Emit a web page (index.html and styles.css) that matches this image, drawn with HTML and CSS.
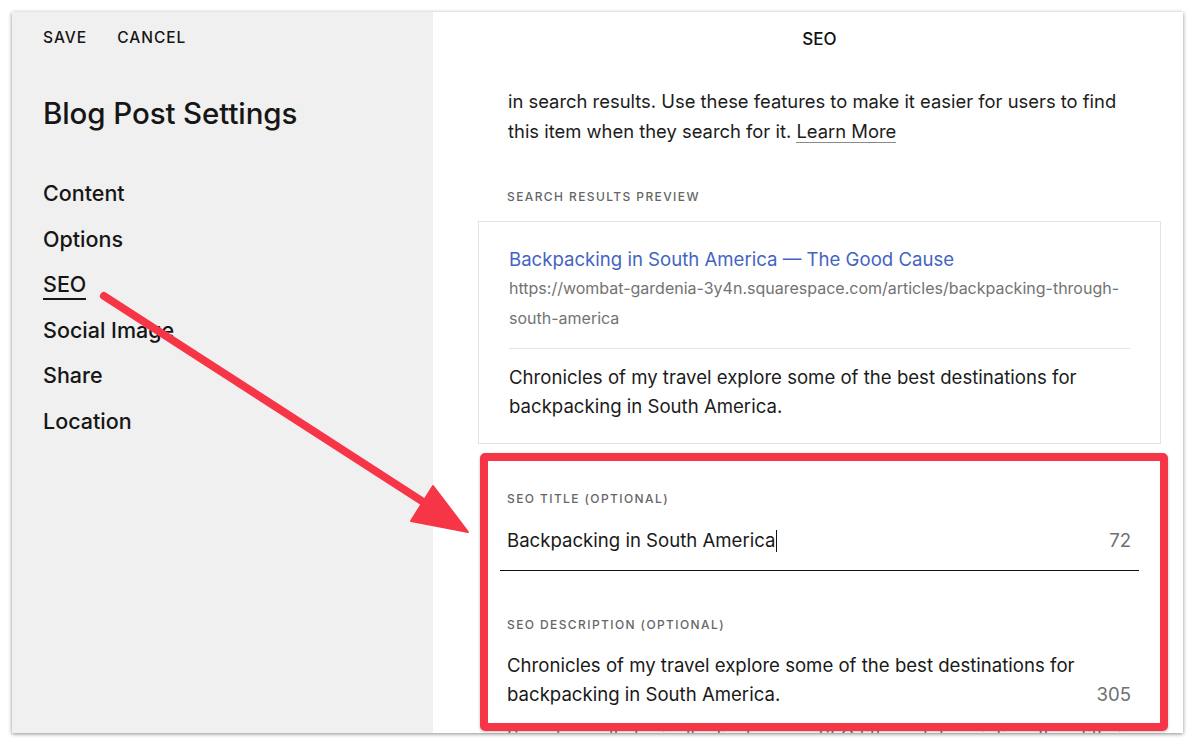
FILE: index.html
```html
<!DOCTYPE html>
<html lang="en">
<head>
<meta charset="utf-8">
<title>Blog Post Settings</title>
<link rel="stylesheet" href="styles.css">
</head>
<body>
<div class="window">
  <aside class="sidebar">
    <div class="actions"><span class="action">SAVE</span><span class="action">CANCEL</span></div>
    <h1 class="title">Blog Post Settings</h1>
    <nav class="nav">
      <div class="nav-item">Content</div>
      <div class="nav-item">Options</div>
      <div class="nav-item"><span class="active">SEO</span></div>
      <div class="nav-item">Social Image</div>
      <div class="nav-item">Share</div>
      <div class="nav-item">Location</div>
    </nav>
  </aside>
  <main class="pane">
    <header class="pane-head">SEO</header>
    <div class="pane-body">
      <p class="intro">in search results. Use these features to make it easier for users to find this item when they search for it. <span class="learn">Learn More</span></p>
      <div class="label preview-label">SEARCH RESULTS PREVIEW</div>
      <div class="preview">
        <div class="p-title">Backpacking in South America — The Good Cause</div>
        <div class="p-url">https://wombat-gardenia-3y4n.squarespace.com/articles/backpacking-through-<br>south-america</div>
        <div class="p-rule"></div>
        <div class="p-desc">Chronicles of my travel explore some of the best destinations for backpacking in South America.</div>
      </div>
      <div class="fields">
        <div class="field">
          <div class="label">SEO TITLE (OPTIONAL)</div>
          <div class="input">
            <span class="value">Backpacking in South America<span class="caret"></span></span>
            <span class="count">72</span>
          </div>
        </div>
        <div class="field field-desc">
          <div class="label">SEO DESCRIPTION (OPTIONAL)</div>
          <div class="textarea">
            <span class="value">Chronicles of my travel explore some of the best destinations for backpacking in South America.</span>
            <span class="count">305</span>
          </div>
        </div>
        <p class="help">Search results typically display your SEO title and description. If no title is set, the item title is used.</p>
      </div>
    </div>
  </main>
</div>
<div class="highlight"></div>
<svg class="arrow" width="1200" height="749" viewBox="0 0 1200 749" aria-hidden="true">
  <line x1="104" y1="296" x2="428" y2="505" stroke="#f63646" stroke-width="8" stroke-linecap="round"/>
  <polygon points="468,532 433,486 411,521" fill="#f63646" stroke="#f63646" stroke-width="2" stroke-linejoin="round"/>
</svg>
</body>
</html>
```

FILE: styles.css
```css
* { box-sizing: border-box; }

html, body {
  margin: 0;
  padding: 0;
  background: #ffffff;
}

body {
  width: 1200px;
  height: 749px;
  overflow: hidden;
  position: relative;
  font-family: "Inter", "Liberation Sans", sans-serif;
  color: #161616;
}

.window {
  margin: 12px 0 0 12px;
  width: 1171px;
  height: 721px;
  display: flex;
  overflow: hidden;
  background: #ffffff;
  box-shadow: 0 1px 4px rgba(0, 0, 0, 0.45);
}

/* ---------- sidebar ---------- */
.sidebar {
  width: 421px;
  flex: none;
  background: #f0f0f0;
  padding: 16px 31px 0;
}

.actions {
  display: flex;
  gap: 30px;
  line-height: 20px;
}

.action {
  font-size: 15.5px;
  font-weight: 500;
  letter-spacing: 1px;
}

.title {
  margin: 47px 0 0;
  font-size: 29.5px;
  font-weight: 500;
  line-height: 36px;
  letter-spacing: -0.1px;
}

.nav {
  margin-top: 40px;
  display: flex;
  flex-direction: column;
}

.nav-item {
  font-size: 21.5px;
  font-weight: 500;
  line-height: 45.6px;
}

.active {
  border-bottom: 2px solid #161616;
  padding-bottom: 1px;
}

/* ---------- main pane ---------- */
.pane {
  flex: 1;
  padding: 0 22px 0 45px;
}

.pane-head {
  height: 54px;
  line-height: 54px;
  text-align: center;
  font-size: 17px;
  font-weight: 500;
  color: #111111;
}

.pane-body {
  display: flex;
  flex-direction: column;
}

.intro {
  margin: 20px 0 0;
  padding: 0 30px;
  font-size: 18.4px;
  line-height: 30px;
  color: #1c1c1c;
}

.learn {
  border-bottom: 1px solid #8a8a8a;
}

.label {
  font-size: 12px;
  line-height: 16px;
  letter-spacing: 1.4px;
  color: #666666;
  font-weight: 500;
}

.preview-label {
  margin: 43px 0 0 29px;
}

.preview {
  margin-top: 16px;
  border: 1px solid #e3e3e3;
  padding: 22px 30px;
}

.p-title {
  font-size: 18.6px;
  line-height: 30px;
  color: #4464c2;
}

.p-url {
  font-size: 16px;
  line-height: 29.5px;
  color: #737373;
}

.p-rule {
  margin-top: 15px;
  height: 1px;
  background: #e6e6e6;
}

.p-desc {
  margin-top: 14px;
  font-size: 18.6px;
  line-height: 29px;
  color: #1c1c1c;
}

/* ---------- form fields ---------- */
.fields {
  margin-top: 47px;
  padding: 0 22px;
}

.field .label {
  margin-left: 7px;
}

.input {
  margin-top: 18px;
  display: flex;
  justify-content: space-between;
  align-items: center;
  padding: 0 8px 15px 7px;
  border-bottom: 1.5px solid #111111;
  font-size: 18.6px;
  line-height: 30px;
}

.value {
  color: #1a1a1a;
}

.caret {
  display: inline-block;
  width: 1px;
  height: 22px;
  background: #111111;
  vertical-align: -5px;
  margin-left: 1px;
}

.count {
  color: #707070;
  flex: none;
}

.field-desc {
  margin-top: 46px;
}

.textarea {
  margin-top: 18px;
  display: flex;
  justify-content: space-between;
  align-items: flex-end;
  gap: 12px;
  padding: 0 8px 0 7px;
  font-size: 18.6px;
  line-height: 29px;
}

.help {
  margin: 16px 0 0 7px;
  font-size: 18px;
  line-height: 24px;
  color: #777777;
}

/* ---------- annotation overlays ---------- */
.highlight {
  position: absolute;
  left: 480px;
  top: 453px;
  width: 688px;
  height: 278px;
  border: 8px solid #f63646;
  border-radius: 5px;
  box-shadow: 0 1px 3px rgba(0, 0, 0, 0.25);
}

.arrow {
  position: absolute;
  left: 0;
  top: 0;
  pointer-events: none;
}
```
